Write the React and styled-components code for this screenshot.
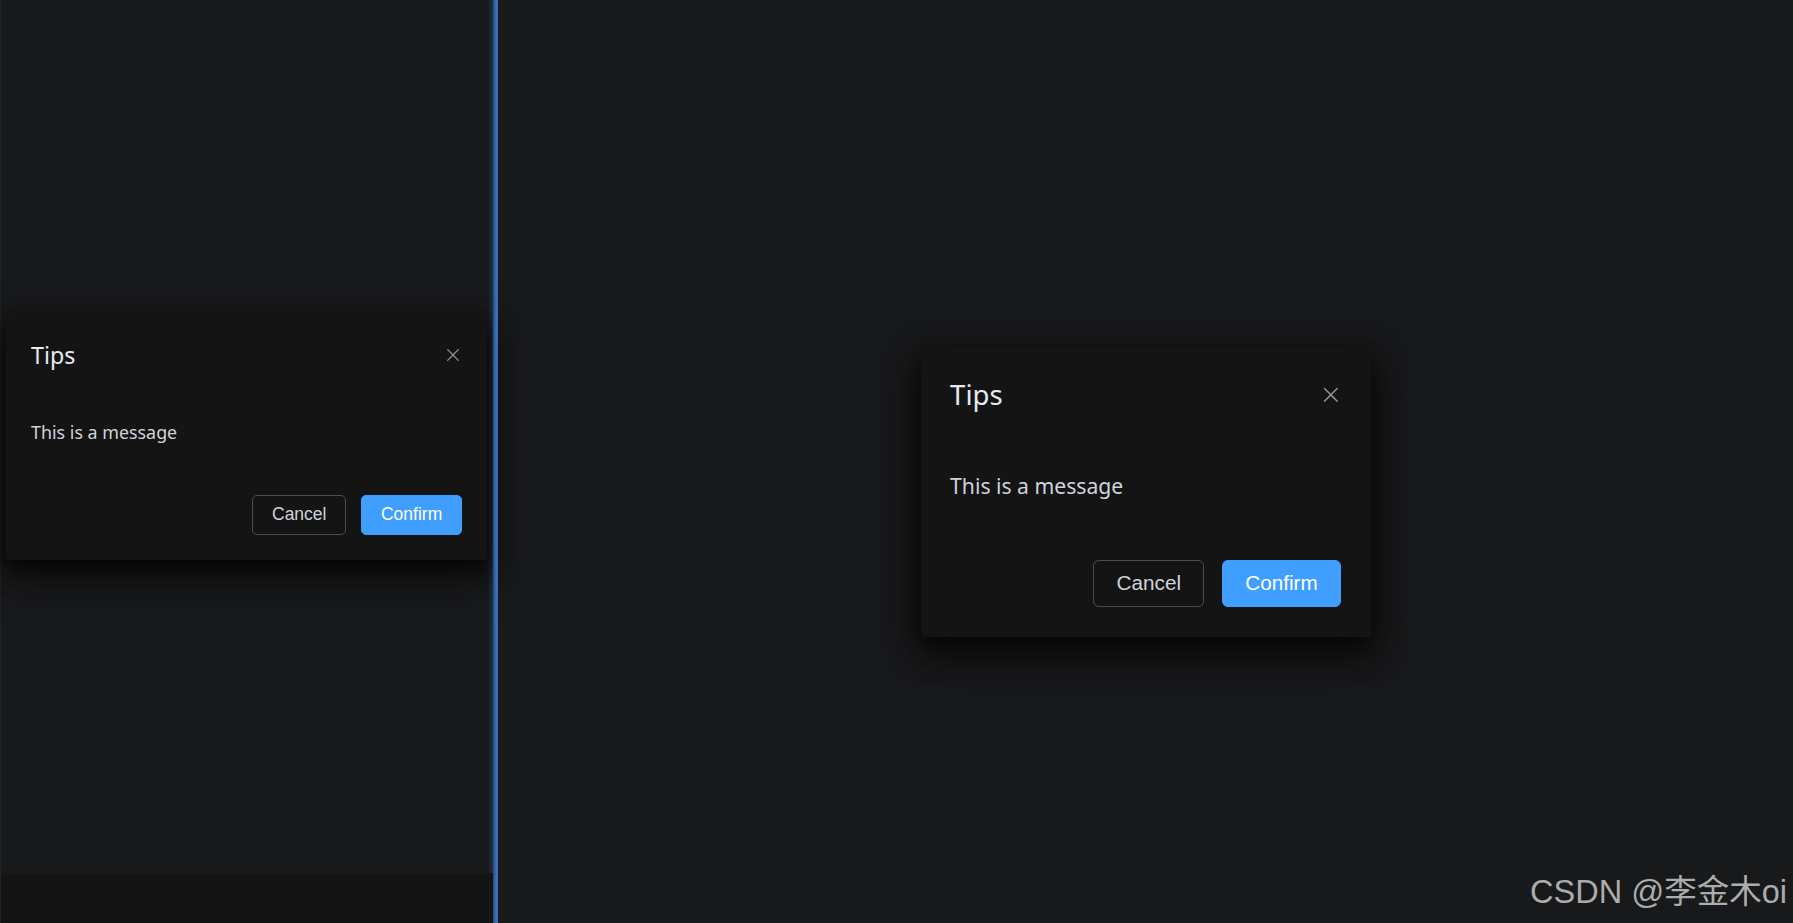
import React from "react";
import styled, { createGlobalStyle } from "styled-components";

const Global = createGlobalStyle`
  html, body { margin: 0; padding: 0; background: #18191b; }
  body { width: 1793px; height: 923px; overflow: hidden; }
  #root { height: 100%; }
`;

const Page = styled.div`
  position: relative;
  display: flex;
  width: 1793px;
  height: 923px;
  background: #18191b;
  font-family: "Noto Sans", "Open Sans", sans-serif;
`;

const SidePanel = styled.div`
  width: 493px;
  flex: 0 0 493px;
  box-sizing: border-box;
  display: flex;
  flex-direction: column;
  background: #18191b;
  border-left: 1px solid #202125;
  box-shadow: inset -5px 0 5px -3px rgba(59, 111, 186, 0.35);
`;

const SideBody = styled.div`
  flex: 1;
  padding: 315px 6px 0 5px;
`;

const SideFooter = styled.div`
  height: 50px;
  background: #141414;
`;

const Divider = styled.div`
  width: 5px;
  flex: 0 0 5px;
  background: linear-gradient(to right, #23436e 0, #2f5a94 1px, #3a6db5 3px, #3d70ba 5px);
`;

const Stage = styled.div`
  flex: 1;
  display: flex;
  justify-content: center;
  align-items: flex-start;
  padding-top: 347px;
`;

const DialogBox = styled.div`
  width: ${(p) => p.$w};
  box-sizing: border-box;
  background: #141414;
  border-radius: ${(p) => 2 * p.$s}px;
  box-shadow: 0 ${(p) => 12 * p.$s}px ${(p) => 32 * p.$s}px ${(p) => 4 * p.$s}px rgba(0, 0, 0, 0.36),
    0 ${(p) => 8 * p.$s}px ${(p) => 20 * p.$s}px rgba(0, 0, 0, 0.72);
`;

const Header = styled.div`
  display: flex;
  align-items: center;
  justify-content: space-between;
  padding: ${(p) => 20 * p.$s}px ${(p) => 19 * p.$s}px ${(p) => 10 * p.$s}px ${(p) => 20 * p.$s}px;
`;

const Title = styled.span`
  font-size: ${(p) => 18.6 * p.$s}px;
  line-height: ${(p) => 24 * p.$s}px;
  color: #e5eaf3;
`;

const CloseBtn = styled.button`
  display: flex;
  align-items: center;
  justify-content: center;
  width: ${(p) => 16 * p.$s}px;
  height: ${(p) => 16 * p.$s}px;
  padding: 0;
  border: 0;
  background: transparent;
  color: #909399;
  cursor: pointer;
  svg { width: 100%; height: 100%; }
`;

const Body = styled.div`
  padding: ${(p) => 30 * p.$s}px ${(p) => 20 * p.$s}px;
  font-size: ${(p) => 14.3 * p.$s}px;
  line-height: ${(p) => 20 * p.$s}px;
  color: #cfd3dc;
`;

const Footer = styled.div`
  display: flex;
  justify-content: flex-end;
  gap: ${(p) => 12 * p.$s}px;
  padding: ${(p) => 10 * p.$s}px ${(p) => 20 * p.$s}px ${(p) => 20 * p.$s}px;
`;

const Button = styled.button`
  box-sizing: border-box;
  height: ${(p) => 32 * p.$s}px;
  padding: 0 ${(p) => 15 * p.$s}px;
  border-radius: ${(p) => 4 * p.$s}px;
  border: ${(p) => 1 * p.$s}px solid ${(p) => (p.$primary ? "#409eff" : "#4c4d4f")};
  background: ${(p) => (p.$primary ? "#409eff" : "transparent")};
  color: ${(p) => (p.$primary ? "#ffffff" : "#cfd3dc")};
  font-family: "Liberation Sans", Arial, sans-serif;
  font-size: ${(p) => 14 * p.$s}px;
  line-height: 1;
  cursor: pointer;
`;

const Watermark = styled.div`
  position: absolute;
  right: 6px;
  bottom: 15px;
  font-family: "Liberation Sans", "Noto Sans CJK SC", sans-serif;
  font-size: 32.5px;
  line-height: 1;
  color: rgba(200, 200, 200, 0.85);
  white-space: nowrap;
`;

const CloseIcon = () => (
  <svg viewBox="0 0 1024 1024" fill="currentColor">
    <path d="M764.288 214.592 512 466.88 259.712 214.592a31.936 31.936 0 0 0-45.12 45.12L466.752 512 214.528 764.224a31.936 31.936 0 1 0 45.12 45.184L512 557.184l252.288 252.288a31.936 31.936 0 0 0 45.12-45.12L557.12 512.064l252.288-252.352a31.936 31.936 0 1 0-45.12-45.184z" />
  </svg>
);

function Dialog({ s, width }) {
  return (
    <DialogBox $s={s} $w={width}>
      <Header $s={s}>
        <Title $s={s}>Tips</Title>
        <CloseBtn $s={s} aria-label="Close">
          <CloseIcon />
        </CloseBtn>
      </Header>
      <Body $s={s}>This is a message</Body>
      <Footer $s={s}>
        <Button $s={s}>Cancel</Button>
        <Button $s={s} $primary>
          Confirm
        </Button>
      </Footer>
    </DialogBox>
  );
}

export default function App() {
  return (
    <>
      <Global />
      <Page>
        <SidePanel>
          <SideBody>
            <Dialog s={1.25} width="100%" />
          </SideBody>
          <SideFooter />
        </SidePanel>
        <Divider />
        <Stage>
          <Dialog s={1.48} width="450px" />
        </Stage>
        <Watermark>CSDN @李金木oi</Watermark>
      </Page>
    </>
  );
}
